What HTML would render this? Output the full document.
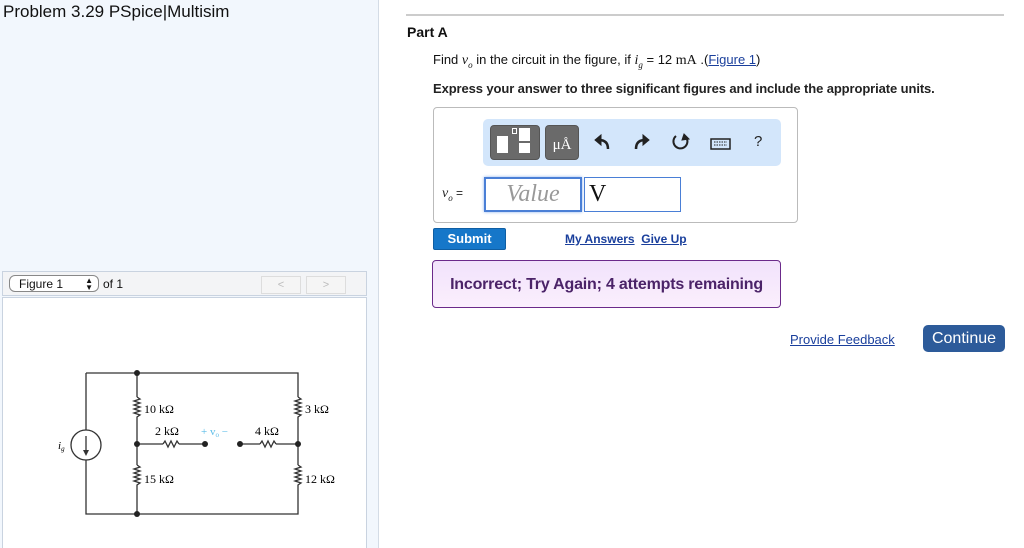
<!DOCTYPE html>
<html><head><meta charset="utf-8"><style>
*{margin:0;padding:0;box-sizing:border-box}
body{width:1024px;height:548px;overflow:hidden;background:#fff;font-family:"Liberation Sans",Arial,sans-serif;position:relative;color:#222}
.abs{position:absolute}
#left{left:0;top:0;width:379px;height:548px;background:#f2f7fd;border-right:1px solid #d4dce6;overflow:hidden}
a{color:#1a3f9c;text-decoration:underline}
</style></head><body>
<div id="left" class="abs">
 <div class="abs" style="left:3px;top:2px;font-size:17px;color:#111">Problem 3.29 PSpice|Multisim</div>
 <div class="abs" style="left:2px;top:271px;width:365px;height:25px;background:#f3f4f6;border:1px solid #c9d3e0"></div>
 <div class="abs" style="left:9px;top:275px;width:90px;height:17px;border:1px solid #888;border-radius:6px;background:#fff;font-size:12px;padding:1px 0 0 9px;color:#111">Figure 1<span style="position:absolute;right:5px;top:1px;font-size:8px;line-height:7px">▲<br>▼</span></div>
 <div class="abs" style="left:103px;top:277px;font-size:12px;color:#111">of 1</div>
 <div class="abs" style="left:261px;top:276px;width:40px;height:18px;border:1px solid #ddd;background:#f5f5f5;color:#bbb;font-size:11px;text-align:center;line-height:16px">&lt;</div>
 <div class="abs" style="left:306px;top:276px;width:40px;height:18px;border:1px solid #ddd;background:#f5f5f5;color:#bbb;font-size:11px;text-align:center;line-height:16px">&gt;</div>
 <div class="abs" style="left:2px;top:297px;width:365px;height:260px;background:#fff;border:1px solid #c9d3e0"></div>
 <svg class="abs" style="left:0;top:0" width="379" height="548" font-family="Liberation Serif,serif" font-size="12">
  <g stroke="#333" stroke-width="1.3" fill="none">
   <path d="M86 373H298V397M298 420V444M298 444V465M298 490V514H86V373"/>
   <path d="M137 373V397M137 420V444M137 465V444M137 490V514"/>
   <path d="M137 444H163M179 444H205M240 444H260M276 444H298"/>
   <path d="M137 397l3 2-6 2 6 2-6 2 6 2-6 2 6 2-6 2 6 2-3 2V420M298 397l3 2-6 2 6 2-6 2 6 2-6 2 6 2-6 2 6 2-3 2V420M137 465l3 2-6 2 6 2-6 2 6 2-6 2 6 2-6 2 6 2-3 2V490M298 465l3 2-6 2 6 2-6 2 6 2-6 2 6 2-6 2 6 2-3 2V490"/>
   <path d="M163 444l2-3 3 6 3-6 3 6 3-6 2 3M260 444l2-3 3 6 3-6 3 6 3-6 2 3"/>
   <circle cx="86" cy="445" r="15" fill="#fff"/>
   <path d="M86 436V452"/>
  </g>
  <path d="M83 450L86 456L89 450Z" fill="#333"/>
  <g fill="#222"><circle cx="137" cy="373" r="3"/><circle cx="137" cy="444" r="3"/><circle cx="137" cy="514" r="3"/><circle cx="205" cy="444" r="3"/><circle cx="240" cy="444" r="3"/><circle cx="298" cy="444" r="3"/></g>
  <text x="144" y="413">10 kΩ</text><text x="305" y="413">3 kΩ</text>
  <text x="155" y="435">2 kΩ</text><text x="255" y="435">4 kΩ</text>
  <text x="144" y="483">15 kΩ</text><text x="305" y="483">12 kΩ</text>
  <text x="58" y="449" font-style="italic" font-size="11">i<tspan font-size="7" dy="2">g</tspan></text>
  <text x="201" y="435" fill="#5bbce8" font-size="11">+ v<tspan font-size="7" dy="2">o</tspan><tspan dy="-2">  −</tspan></text>
 </svg>
</div>
<div class="abs" style="left:406px;top:14px;width:598px;height:2px;background:#ccc"></div>
<div class="abs" style="left:407px;top:24px;font-size:14px;font-weight:bold;color:#111">Part A</div>
<div class="abs" style="left:433px;top:52px;font-size:13px;color:#111">Find <i style="font-family:'Liberation Serif',serif;font-size:14px">v<sub style="font-size:9px">o</sub></i> in the circuit in the figure, if <i style="font-family:'Liberation Serif',serif;font-size:14px">i<sub style="font-size:9px">g</sub></i> = 12 <span style="font-family:'Liberation Serif',serif;font-size:14px">mA</span> .(<a href="#">Figure 1</a>)</div>
<div class="abs" style="left:433px;top:81px;font-size:13px;font-weight:bold;color:#222;letter-spacing:-0.1px">Express your answer to three significant figures and include the appropriate units.</div>
<div class="abs" style="left:433px;top:107px;width:365px;height:116px;border:1px solid #bbb;border-radius:4px"></div>
<div class="abs" style="left:483px;top:119px;width:298px;height:47px;background:#d3e6fb;border-radius:5px"></div>
<div class="abs" style="left:490px;top:125px;width:50px;height:35px;background:#6a6a6a;border-radius:4px;border:1px solid #555"></div>
<div class="abs" style="left:497px;top:136px;width:11px;height:17px;background:#fff"></div>
<div class="abs" style="left:512px;top:128px;width:5px;height:6px;border:1px solid #fff"></div>
<div class="abs" style="left:519px;top:128px;width:11px;height:13px;background:#fff"></div>
<div class="abs" style="left:519px;top:143px;width:11px;height:10px;background:#fff"></div>
<div class="abs" style="left:545px;top:125px;width:34px;height:35px;background:#6a6a6a;border-radius:4px;border:1px solid #555;color:#fff;font-family:'Liberation Serif',serif;font-size:15px;text-align:center;line-height:38px">μÅ</div>
<svg class="abs" style="left:590px;top:130px" width="190" height="26" fill="none" stroke="#222" stroke-width="2.5">
 <path d="M18 19C18 12 14 10 9 10"/><path d="M5 10L11 5V15Z" fill="#222" stroke-width="1"/>
 <path d="M46 19C46 12 50 10 55 10"/><path d="M59 10L53 5V15Z" fill="#222" stroke-width="1"/>
 <path d="M86 6A7 7 0 1 0 97 9" stroke-width="2"/><path d="M94 4L99 9L92 10Z" fill="#222" stroke-width="1"/>
 <rect x="121" y="9" width="19" height="10" stroke-width="1.5"/><path d="M124 12h13M124 15h13" stroke-width="1" stroke-dasharray="1.5 1"/>
</svg>
<div class="abs" style="left:754px;top:133px;font-size:15px;color:#222">?</div>
<div class="abs" style="left:442px;top:186px;font-size:12px;color:#222"><i style="font-family:'Liberation Serif',serif;font-size:14px">v<sub style="font-size:9px">o</sub></i> =</div>
<div class="abs" style="left:484px;top:177px;width:98px;height:35px;border:2px solid #4a7fd6;box-shadow:0 0 3px #8ab0ee;font-family:'Liberation Serif',serif;font-style:italic;font-size:24px;color:#999;text-align:center;line-height:31px">Value</div>
<div class="abs" style="left:584px;top:177px;width:97px;height:35px;border:1px solid #4a7fd6;font-family:'Liberation Serif',serif;font-size:24px;color:#111;padding-left:4px;line-height:33px">V</div>
<div class="abs" style="left:433px;top:228px;width:73px;height:22px;background:#1677c9;border-radius:2px;border:1px solid #0f5ea3;color:#fff;font-weight:bold;font-size:13px;text-align:center;line-height:20px">Submit</div>
<div class="abs" style="left:565px;top:232px;font-size:12px;font-weight:bold"><a href="#">My Answers</a>&nbsp;&nbsp;<a href="#">Give Up</a></div>
<div class="abs" style="left:432px;top:260px;width:349px;height:48px;background:linear-gradient(#f1e2fb,#fbeffd);border:1px solid #6b2a8a;border-radius:4px;color:#4b2368;font-weight:bold;font-size:16px;text-align:center;line-height:47px;letter-spacing:-0.2px">Incorrect; Try Again; 4 attempts remaining</div>
<div class="abs" style="left:790px;top:332px;font-size:13px"><a href="#">Provide Feedback</a></div>
<div class="abs" style="left:923px;top:325px;width:82px;height:27px;background:#2d5b9a;border-radius:5px;color:#fff;font-size:16px;text-align:center;line-height:27px">Continue</div>
</body></html>
